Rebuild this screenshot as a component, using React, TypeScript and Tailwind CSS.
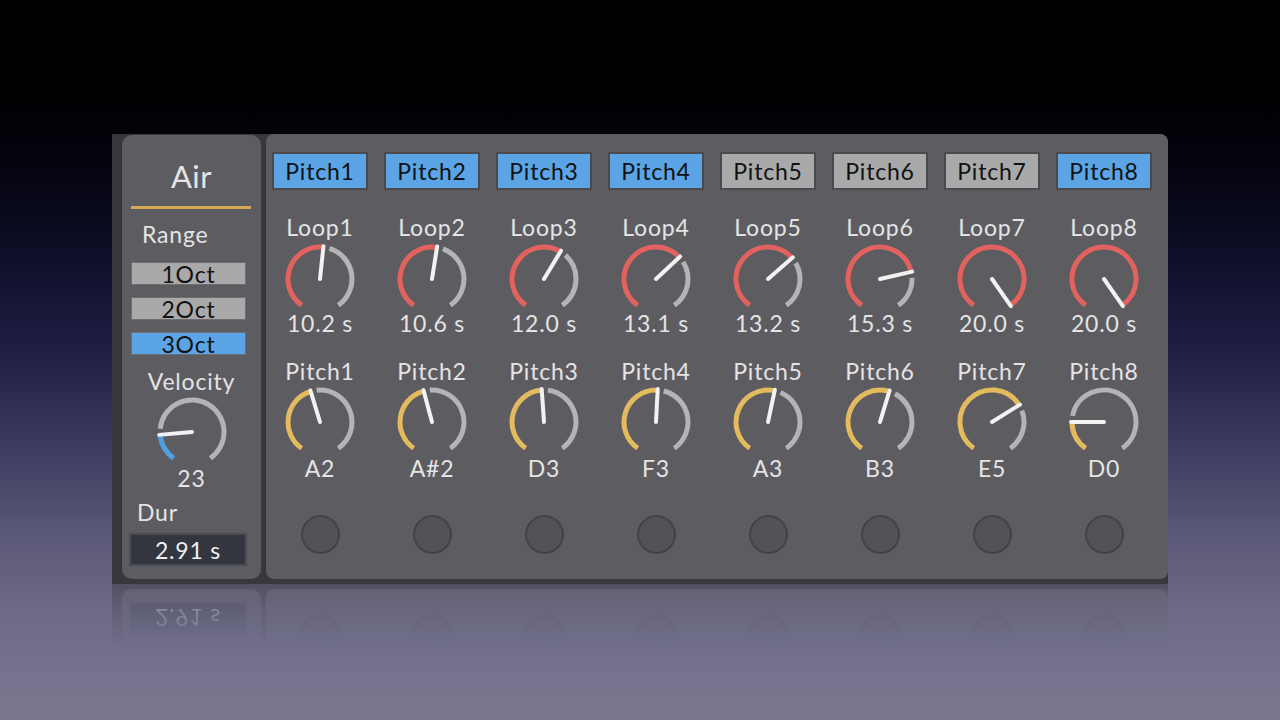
import React from "react";

const MIN = -145;
const MAX = 145;
const C = 37;

function polar(r: number, deg: number): [number, number] {
  const a = (deg * Math.PI) / 180;
  return [C + r * Math.sin(a), C - r * Math.cos(a)];
}

function arc(r: number, a1: number, a2: number): string {
  if (a2 <= a1) return "";
  const [x1, y1] = polar(r, a1);
  const [x2, y2] = polar(r, a2);
  const large = a2 - a1 > 180 ? 1 : 0;
  return `M ${x1.toFixed(2)} ${y1.toFixed(2)} A ${r} ${r} 0 ${large} 1 ${x2.toFixed(2)} ${y2.toFixed(2)}`;
}

function Knob({ angle, color }: { angle: number; color: string }) {
  const colEnd = Math.max(MIN, angle - 3);
  const grayStart = Math.min(MAX, angle + 11);
  const [nx, ny] = polar(33, angle);
  return (
    <svg width={74} height={74} viewBox="0 0 74 74" className="block shrink-0">
      {colEnd > MIN && <path d={arc(32, MIN, colEnd)} stroke={color} strokeWidth={5} fill="none" />}
      {grayStart < MAX && <path d={arc(32, grayStart, MAX)} stroke="#b4b4b6" strokeWidth={5} fill="none" />}
      <line x1={C} y1={C} x2={nx} y2={ny} stroke="#f2f2f2" strokeWidth={4} strokeLinecap="round" />
    </svg>
  );
}

const buttons = [true, true, true, true, false, false, false, true];
const loops: [string, number][] = [
  ["10.2 s", 6],
  ["10.6 s", 9],
  ["12.0 s", 31],
  ["13.1 s", 47],
  ["13.2 s", 49],
  ["15.3 s", 77],
  ["20.0 s", 145],
  ["20.0 s", 145],
];
const pitches: [string, number][] = [
  ["A2", -17],
  ["A#2", -15],
  ["D3", -4],
  ["F3", 3],
  ["A3", 12],
  ["B3", 17],
  ["E5", 58],
  ["D0", -90],
];

const FONT = "[font-family:Lato,'Open_Sans',sans-serif]";
const TXT = "text-[23px] leading-[20px] tracking-[0.8px]";

function OctButton({ label, active }: { label: string; active: boolean }) {
  return (
    <div
      className={
        "ml-[9px] w-[115px] h-[23px] flex items-center justify-center border border-[#6e6e72] text-[#111] " +
        TXT +
        " " +
        (active ? "bg-[#5ba5e6]" : "bg-[#a9a9aa]")
      }
    >
      {label}
    </div>
  );
}

function Device() {
  return (
    <div className={"w-[1056px] h-[450px] bg-[#38383c] flex pl-[10px] pb-[5px] gap-[5px] rounded-tr-[8px] " + FONT}>
      <div className="w-[139px] mt-[1px] rounded-[10px] bg-[#5d5d61] flex flex-col text-[#e4e4e4]">
        <div className="mt-[26px] text-center text-[31px] leading-[30px] tracking-[0.5px]">Air</div>
        <div className="mt-[15px] ml-[9px] w-[120px] h-[3px] bg-[#d6a955]" />
        <div className={"mt-[15px] pl-[20px] " + TXT}>Range</div>
        <div className="mt-[18px]">
          <OctButton label="1Oct" active={false} />
        </div>
        <div className="mt-[12px]">
          <OctButton label="2Oct" active={false} />
        </div>
        <div className="mt-[12px]">
          <OctButton label="3Oct" active={true} />
        </div>
        <div className={"mt-[16px] text-center " + TXT}>Velocity</div>
        <div className="mt-[4px] flex justify-center">
          <Knob angle={-95} color="#4f9fe2" />
        </div>
        <div className={"mt-[-1px] text-center " + TXT}>23</div>
        <div className={"mt-[14px] pl-[15px] " + TXT}>Dur</div>
        <div
          className={
            "mt-[11px] ml-[7px] w-[118px] h-[33px] bg-[#33353f] border-2 border-[#4b4d55] flex items-center justify-center text-[#f0f0f0] " +
            TXT
          }
        >
          2.91 s
        </div>
      </div>
      <div className="flex-1 rounded-[8px] bg-[#5d5d61] pt-[18px]">
        <div className="ml-[-2px] grid grid-cols-[repeat(8,112px)]">
          {buttons.map((active, i) => (
            <div key={i} className="flex flex-col items-center text-[#e4e4e4]">
              <div
                className={
                  "w-[96px] h-[38px] flex items-center justify-center border-2 border-[#4a4a4e] text-[#111] " +
                  TXT +
                  " " +
                  (active ? "bg-[#5ba5e6]" : "bg-[#a9a9aa]")
                }
              >
                Pitch{i + 1}
              </div>
              <div className={"mt-[27px] " + TXT}>Loop{i + 1}</div>
              <div className="mt-[5px]">
                <Knob angle={loops[i][1]} color="#e1625e" />
              </div>
              <div className={"mt-[-3px] " + TXT}>{loops[i][0]}</div>
              <div className={"mt-[28px] " + TXT}>Pitch{i + 1}</div>
              <div className="mt-[4px]">
                <Knob angle={pitches[i][1]} color="#e3ba5d" />
              </div>
              <div className={"mt-[-1px] " + TXT}>{pitches[i][0]}</div>
              <div className="mt-[37px] w-[39px] h-[39px] rounded-full bg-[#535357] border-2 border-[#434347]" />
            </div>
          ))}
        </div>
      </div>
    </div>
  );
}

function Reflection() {
  return (
    <div
      aria-hidden="true"
      className={
        "h-[70px] w-[1056px] overflow-hidden bg-[#38383c] flex pl-[10px] pt-[5px] gap-[5px] opacity-60 [mask-image:linear-gradient(to_bottom,rgba(0,0,0,0.7),rgba(0,0,0,0.35)_25px,transparent_66px)] " +
        FONT
      }
    >
      <div className="w-[139px] h-[80px] rounded-t-[10px] bg-[#5d5d61] pt-[13px]">
        <div
          className={
            "ml-[7px] w-[118px] h-[33px] bg-[#33353f] border-2 border-[#4b4d55] flex items-center justify-center text-[#f0f0f0] [transform:scaleY(-1)] " +
            TXT
          }
        >
          2.91 s
        </div>
      </div>
      <div className="flex-1 h-[80px] rounded-t-[8px] bg-[#5d5d61] pt-[25px]">
        <div className="ml-[-2px] grid grid-cols-[repeat(8,112px)]">
          {buttons.map((_, i) => (
            <div key={i} className="flex justify-center">
              <div className="w-[39px] h-[39px] rounded-full bg-[#535357] border-2 border-[#434347]" />
            </div>
          ))}
        </div>
      </div>
    </div>
  );
}

export default function App() {
  return (
    <div className="w-[1280px] h-[720px] overflow-hidden pt-[134px] pl-[112px] bg-[linear-gradient(to_bottom,#000000_0%,#010104_15%,#03030c_21%,#0e0e28_35%,#1f1f45_49%,#3c3c60_62%,#5c5a78_75%,#6e6c88_86%,#7a7890_100%)]">
      <Device />
      <Reflection />
    </div>
  );
}
